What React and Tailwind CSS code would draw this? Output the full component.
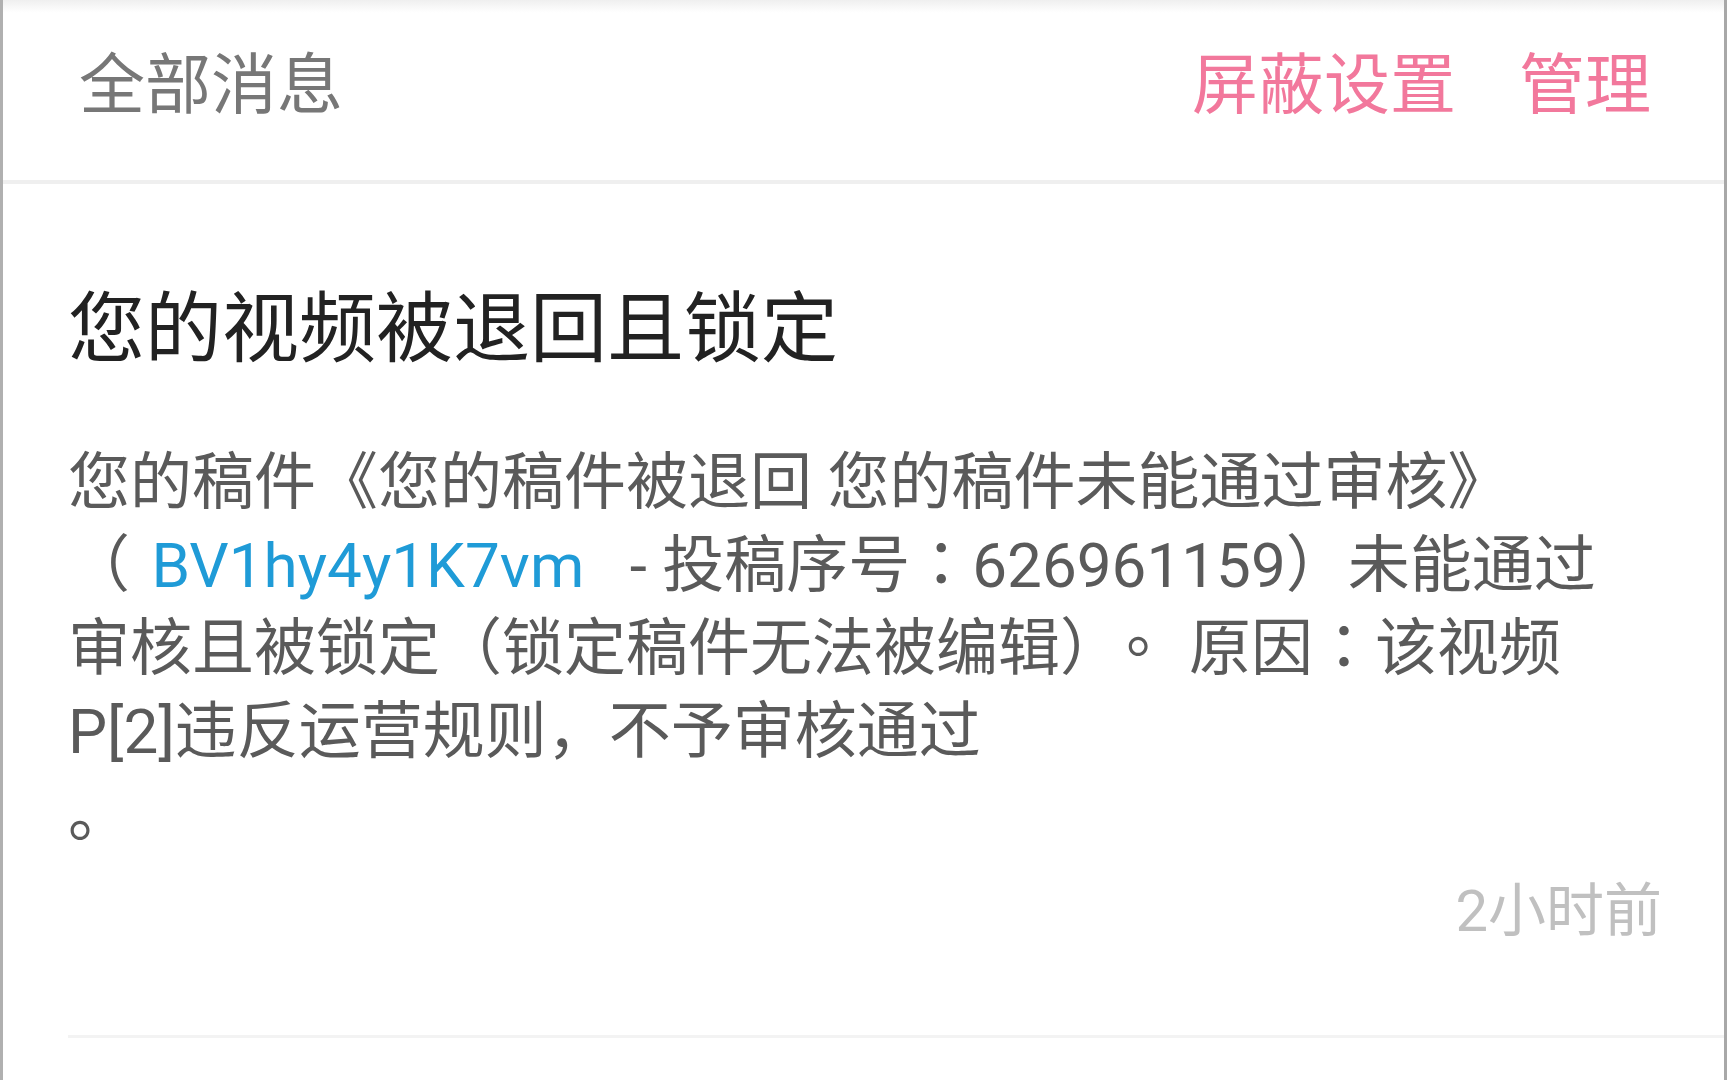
export default function App() {
  const font = { fontFamily: 'Roboto, "Noto Sans CJK SC", "Noto Sans", sans-serif' };
  const tc = { fontFamily: '"Noto Sans CJK TC", sans-serif' };
  return (
    <div
      className="w-[1728px] h-[1080px] bg-white overflow-hidden flex"
      style={font}
    >
      <div className="w-[1727px] h-full border-l-[3px] border-r-[3px] border-l-[#b0b0b0] border-r-[#a8a8a8] flex flex-col">
        {/* header */}
        <div className="h-[180px] bg-gradient-to-b from-[#efefef] via-white via-[7%] to-white flex items-center justify-between pl-[76px] pr-[73px] pb-[8px]">
          <div className="text-[66px] leading-none text-[#777777]">全部消息</div>
          <div className="flex gap-[63px] text-[66px] leading-none text-[#f2789c]">
            <span>屏蔽设置</span>
            <span>管理</span>
          </div>
        </div>
        <div className="h-[4px] bg-[#efefef]" />

        {/* message */}
        <div className="pl-[65px] flex flex-col">
          <div className="mt-[108px] text-[77px] leading-none text-[#222222]">
            您的视频被退回且锁定
          </div>
          <div className="mt-[72px] text-[62px] leading-[83px] text-[#5a5a5a] whitespace-nowrap">
            <div className="h-[83px]">您的稿件《您的稿件被退回 您的稿件未能通过审核》</div>
            <div className="h-[83px]">
              （ <span className="ml-[6px] mr-[30px] text-[#1f9bd7]">BV1hy4y1K7vm</span> - 投稿序号<span className="leading-none" style={tc}>：</span>626961159）未能通过
            </div>
            <div className="h-[83px]">
              审核且被锁定（锁定稿件无法被编辑）<span className="leading-none ml-[16px] mr-[20px]" style={tc}>。</span>原因<span className="leading-none" style={tc}>：</span>该视频
            </div>
            <div className="h-[83px]">P[2]违反运营规则，不予审核通过</div>
            <div className="h-[83px]">。</div>
          </div>
          <div className="flex justify-end pr-[62px] mt-[26px]">
            <span className="text-[58px] leading-none text-[#c0c0c0]">2小时前</span>
          </div>
          <div className="mt-[95px] h-[3px] bg-[#f3f3f3]" />
        </div>
      </div>
    </div>
  );
}
